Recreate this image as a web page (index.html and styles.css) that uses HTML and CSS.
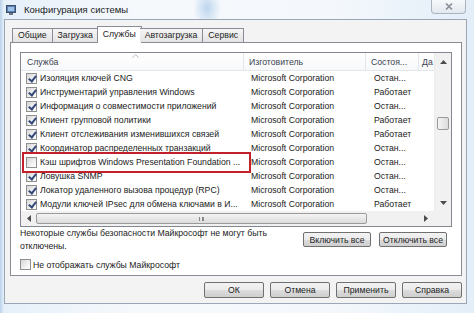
FILE: index.html
```html
<!DOCTYPE html>
<html lang="ru">
<head>
    <meta charset="UTF-8">
    <title>Конфигурация системы</title>
    <link rel="stylesheet" href="styles.css">
</head>
<body>
    <div class="window">
        <div class="titlebar">
            <svg class="app-icon" width="10" height="10" viewBox="0 0 10 10">
                <rect x="0.5" y="0.5" width="9" height="7" fill="#5b7fb0" stroke="#3d4f6b"/>
                <rect x="2" y="2" width="6" height="4" fill="#9fc2ea"/>
                <rect x="3" y="8" width="4" height="2" fill="#6d7684"/>
            </svg>
            <span class="title">Конфигурация системы</span>
            <div class="close-btn">
                <svg width="8" height="7" viewBox="0 0 8 7">
                    <path d="M1 0.5 L7 6.5 M7 0.5 L1 6.5" stroke="#8a8f98" stroke-width="1.6"/>
                </svg>
            </div>
        </div>

        <div class="client">
            <div class="tabs">
                <div class="tab">Общие</div>
                <div class="tab">Загрузка</div>
                <div class="tab active">Службы</div>
                <div class="tab">Автозагрузка</div>
                <div class="tab">Сервис</div>
            </div>

            <div class="tab-panel">
                <div class="listview">
                    <div class="lv-header">
                        <div class="col col-name">Служба
                            <svg class="sort-arrow" width="7" height="4" viewBox="0 0 7 4"><path d="M0.5 3.5 L3.5 0.5 L6.5 3.5" stroke="#b7bcc4" fill="none"/></svg>
                        </div>
                        <div class="col col-maker">Изготовитель</div>
                        <div class="col col-state">Состоя...</div>
                        <div class="col col-date">Да</div>
                    </div>

                    <div class="vscroll">
                        <div class="sb-btn">
                            <svg width="7" height="4" viewBox="0 0 7 4"><path d="M0 4 L3.5 0 L7 4 Z" fill="#4d4d4d"/></svg>
                        </div>
                        <div class="vtrack">
                            <div class="vthumb"></div>
                        </div>
                        <div class="sb-btn">
                            <svg width="7" height="4" viewBox="0 0 7 4"><path d="M0 0 L3.5 4 L7 0 Z" fill="#4d4d4d"/></svg>
                        </div>
                    </div>

                    <div class="lv-rows">
                        <div class="row"><span class="cb checked"></span><span class="c-name">Изоляция ключей CNG</span><span class="c-maker">Microsoft Corporation</span><span class="c-state">Остан...</span></div>
                        <div class="row"><span class="cb checked"></span><span class="c-name">Инструментарий управления Windows</span><span class="c-maker">Microsoft Corporation</span><span class="c-state">Работает</span></div>
                        <div class="row"><span class="cb checked"></span><span class="c-name">Информация о совместимости приложений</span><span class="c-maker">Microsoft Corporation</span><span class="c-state">Остан...</span></div>
                        <div class="row"><span class="cb checked"></span><span class="c-name">Клиент групповой политики</span><span class="c-maker">Microsoft Corporation</span><span class="c-state">Работает</span></div>
                        <div class="row"><span class="cb checked"></span><span class="c-name">Клиент отслеживания изменившихся связей</span><span class="c-maker">Microsoft Corporation</span><span class="c-state">Работает</span></div>
                        <div class="row"><span class="cb checked"></span><span class="c-name">Координатор распределенных транзакций</span><span class="c-maker">Microsoft Corporation</span><span class="c-state">Остан...</span></div>
                        <div class="row"><span class="cb"></span><span class="c-name">Кэш шрифтов Windows Presentation Foundation ...</span><span class="c-maker">Microsoft Corporation</span><span class="c-state">Остан...</span></div>
                        <div class="row"><span class="cb checked"></span><span class="c-name">Ловушка SNMP</span><span class="c-maker">Microsoft Corporation</span><span class="c-state">Остан...</span></div>
                        <div class="row"><span class="cb checked"></span><span class="c-name">Локатор удаленного вызова процедур (RPC)</span><span class="c-maker">Microsoft Corporation</span><span class="c-state">Остан...</span></div>
                        <div class="row"><span class="cb checked"></span><span class="c-name">Модули ключей IPsec для обмена ключами в И...</span><span class="c-maker">Microsoft Corporation</span><span class="c-state">Работает</span></div>
                    </div>

                    <div class="hscroll">
                        <div class="sb-btn">
                            <svg width="4" height="7" viewBox="0 0 4 7"><path d="M4 0 L0 3.5 L4 7 Z" fill="#4d4d4d"/></svg>
                        </div>
                        <div class="htrack">
                            <div class="hthumb"><span class="grip"></span></div>
                        </div>
                        <div class="sb-btn">
                            <svg width="4" height="7" viewBox="0 0 4 7"><path d="M0 0 L4 3.5 L0 7 Z" fill="#4d4d4d"/></svg>
                        </div>
                    </div>
                    <div class="sb-corner"></div>

                    <div class="highlight"></div>
                </div>

                <div class="note-row">
                    <p class="note">Некоторые службы безопасности Майкрософт не могут быть<br>отключены.</p>
                    <div class="note-buttons">
                        <button class="btn">Включить все</button>
                        <button class="btn">Отключить все</button>
                    </div>
                </div>

                <label class="hide-ms">
                    <span class="cb"></span>
                    <span>Не отображать службы Майкрософт</span>
                </label>
            </div>

            <div class="dialog-buttons">
                <button class="btn btn-wide">ОК</button>
                <button class="btn btn-wide">Отмена</button>
                <button class="btn btn-wide">Применить</button>
                <button class="btn btn-wide">Справка</button>
            </div>
        </div>
    </div>
</body>
</html>
```

FILE: styles.css
```css
* {
    margin: 0;
    padding: 0;
    box-sizing: border-box;
}
body {
    width: 474px;
    height: 313px;
    overflow: hidden;
    font-family: "Liberation Sans", Arial, sans-serif;
    font-size: 8.7px;
    color: #1a1a1a;
}
.window {
    height: 313px;
    padding: 0 7px 0 4px;
    background:
        radial-gradient(ellipse 14px 20px at 207px 8px, rgba(120, 170, 220, 0.45), transparent),
        linear-gradient(to right, #b9d3ea 0, #e6f0f9 4px, #f6f9fc 30%, #f4f8fc 70%, #e3eef8 100%);
}

/* title bar */
.titlebar {
    height: 19px;
    display: flex;
    align-items: center;
}
.app-icon {
    margin-left: 2px;
    margin-right: 8px;
}
.title {
    font-size: 9.5px;
    color: #1c1c1c;
}
.close-btn {
    margin-left: auto;
    margin-right: 1px;
    align-self: flex-start;
    width: 35px;
    height: 14px;
    border: 1px solid #aab4c0;
    border-top: none;
    border-radius: 0 0 4px 4px;
    background: linear-gradient(#f7f9fb, #e2e8ef);
    display: flex;
    align-items: center;
    justify-content: center;
}

/* client area */
.client {
    height: 285px;
    border: 1px solid #9aa7b6;
    background: #f3f3f3;
    padding: 6px 4px 0 5px;
}
.tabs {
    display: flex;
    align-items: flex-end;
    height: 17px;
    padding-left: 2px;
    position: relative;
    z-index: 1;
    margin-bottom: -1px;
}
.tab {
    height: 14px;
    margin-bottom: 1px;
    border: 1px solid #898c95;
    border-bottom: none;
    border-left: none;
    background: linear-gradient(#f6f6f6, #e3e3e3);
    color: #222;
    padding: 0 5px;
    line-height: 13px;
    white-space: nowrap;
}
.tab:first-child {
    border-left: 1px solid #898c95;
}
.tab.active {
    height: 17px;
    margin-bottom: 0;
    margin-left: -2px;
    margin-right: -2px;
    padding: 0 5px;
    border-left: 1px solid #898c95;
    background: #ffffff;
    line-height: 14px;
}
.tab-panel {
    height: 234px;
    border: 1px solid #898c95;
    background: #ffffff;
    padding: 9px 9px 0 9px;
}

/* list view */
.listview {
    position: relative;
    display: grid;
    grid-template-columns: 413px 17px;
    grid-template-rows: 18px 140px 15px;
    width: 432px;
    border: 1px solid #828790;
    background: #ffffff;
}
.lv-header {
    display: grid;
    grid-template-columns: 223px 122px 53px 15px;
    border-bottom: 1px solid #e3e6ea;
    background: linear-gradient(#ffffff, #f7f8fa);
    color: #3a4350;
}
.col {
    position: relative;
    padding-left: 5px;
    line-height: 18px;
    white-space: nowrap;
    overflow: hidden;
    border-right: 1px solid #e3e6ea;
}
.col-name {
    padding-left: 6px;
    overflow: visible;
}
.col-date {
    padding-left: 3px;
    border-right: none;
}
.sort-arrow {
    position: absolute;
    left: 111px;
    top: 1px;
}
.lv-rows {
    grid-column: 1;
    grid-row: 2;
    overflow: hidden;
}
.row {
    display: grid;
    grid-template-columns: 19px 204px 122px 53px 15px;
    align-items: center;
    height: 14px;
    white-space: nowrap;
}
.row .cb {
    margin-left: 5px;
}
.c-name {
    overflow: hidden;
}
.c-maker {
    padding-left: 7px;
}
.c-state {
    padding-left: 8px;
}

/* checkbox */
.cb {
    position: relative;
    display: inline-block;
    width: 11px;
    height: 11px;
    border: 1px solid #8e8f8f;
    background: linear-gradient(135deg, #d6d6d6, #f6f6f6 70%, #ffffff);
}
.cb.checked::after {
    content: "";
    position: absolute;
    left: 3px;
    top: 0;
    width: 3px;
    height: 6px;
    border: solid #34497a;
    border-width: 0 2px 2px 0;
    transform: rotate(38deg);
}

/* scroll bars */
.vscroll {
    grid-column: 2;
    grid-row: 1 / 3;
    display: flex;
    flex-direction: column;
    background: #f1f1f1;
    border-left: 1px solid #ececec;
}
.hscroll {
    grid-column: 1;
    grid-row: 3;
    display: flex;
    background: #f1f1f1;
}
.sb-btn {
    width: 16px;
    height: 15px;
    display: flex;
    align-items: center;
    justify-content: center;
    flex: none;
}
.vscroll .sb-btn {
    width: 16px;
    height: 17px;
}
.vtrack {
    flex: 1;
    padding: 0 2px;
}
.vthumb {
    margin-top: 47px;
    height: 13px;
    border: 1px solid #9a9a9a;
    border-radius: 2px;
    background: linear-gradient(to right, #f4f4f4, #dcdcdc);
}
.htrack {
    flex: 1;
    padding: 2px 0;
}
.hthumb {
    width: 331px;
    height: 11px;
    margin-left: -1px;
    border: 1px solid #9a9a9a;
    border-radius: 2px;
    background: linear-gradient(#f4f4f4, #dcdcdc);
    display: flex;
    align-items: center;
    justify-content: center;
}
.grip {
    width: 5px;
    height: 4px;
    border-left: 1px solid #888;
    border-right: 1px solid #888;
    background: linear-gradient(to right, transparent 2px, #888 2px, #888 3px, transparent 3px);
}
.sb-corner {
    grid-column: 2;
    grid-row: 3;
    background: #f1f1f1;
}

/* annotation box drawn over the list */
.highlight {
    position: absolute;
    left: 1px;
    top: 99px;
    width: 229px;
    height: 21px;
    border: 2px solid #c3202b;
    pointer-events: none;
}

/* below list */
.note-row {
    display: flex;
    align-items: flex-start;
}
.note {
    flex: 1;
    line-height: 13px;
}
.note-buttons {
    display: flex;
    gap: 8px;
    margin-top: 5px;
    margin-right: 5px;
}
.btn {
    font-family: inherit;
    font-size: 8.7px;
    color: #1e1e1e;
    height: 15px;
    padding: 0 3px;
    border: 1px solid #707070;
    border-radius: 2px;
    background: linear-gradient(#f2f2f2 0, #ebebeb 50%, #dddddd 50%, #cfcfcf 100%);
    line-height: 12px;
    white-space: nowrap;
}
.note-buttons .btn {
    width: 68px;
}
.hide-ms {
    display: flex;
    align-items: center;
    gap: 2px;
    margin-top: 6px;
}
.dialog-buttons {
    display: flex;
    justify-content: flex-end;
    gap: 6px;
    margin-top: 6px;
}
.btn-wide {
    width: 60px;
    height: 16px;
}
```
